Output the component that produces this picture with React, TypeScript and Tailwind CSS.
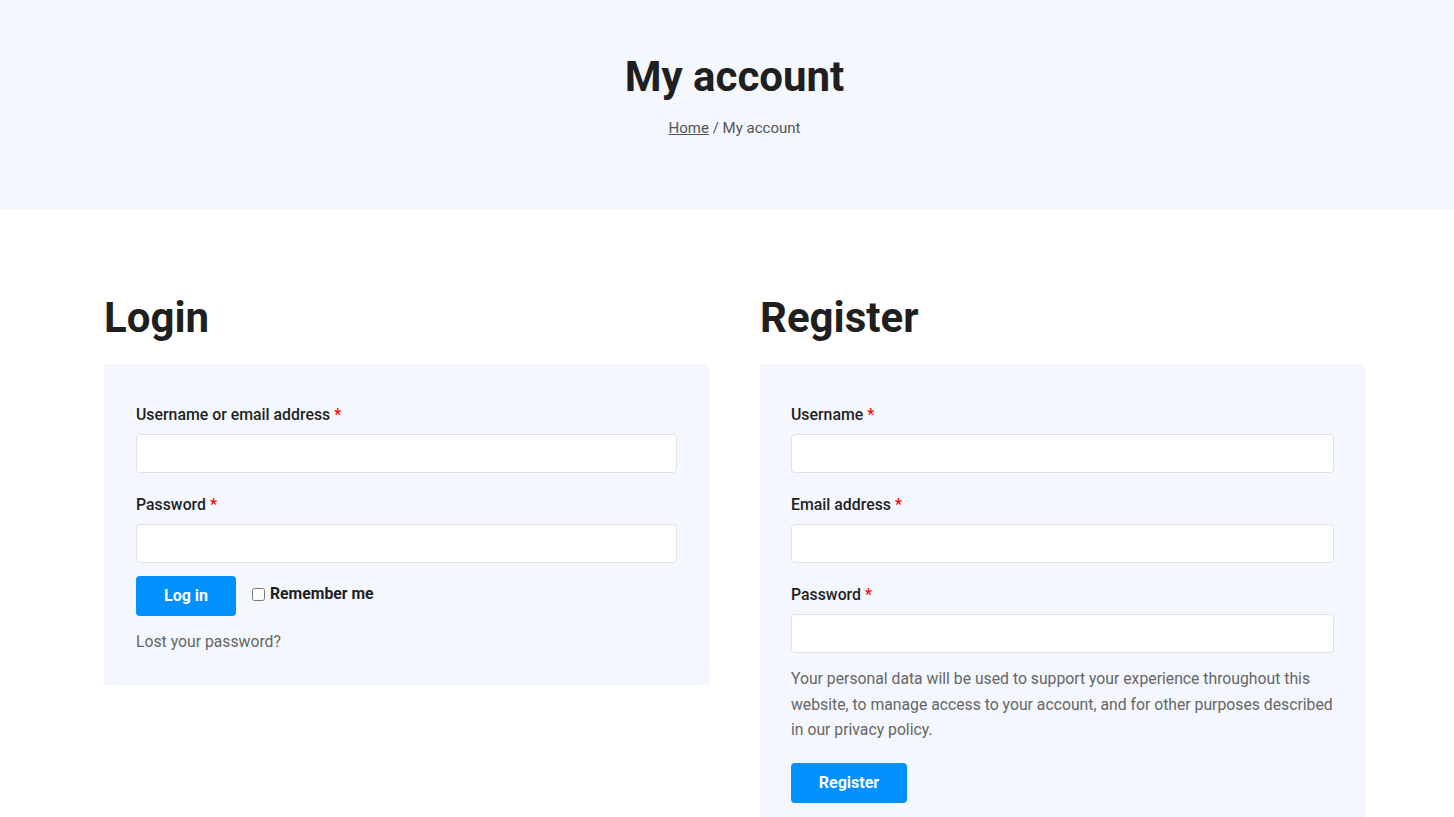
import React from 'react';

const font = { fontFamily: 'Roboto, "Liberation Sans", sans-serif' };

const inputCls =
  'block w-full h-[39px] bg-white border border-[#dfe1e5] rounded-[4px] px-3 outline-none';

function Field({ label, type = 'text', mb = 'mb-[21px]' }: { label: string; type?: string; mb?: string }) {
  return (
    <div className={mb}>
      <label className="block h-[22px] text-[15.85px] leading-[22px] font-medium text-[#1f1f1f] mb-[8px]">
        {label} <span className="text-[#ff0000]">*</span>
      </label>
      <input type={type} className={inputCls} />
    </div>
  );
}

export default function App() {
  return (
    <div className="min-h-screen bg-white text-[#1f1f1f]" style={font}>
      <header className="h-[209px] bg-[#f4f7fd] flex flex-col items-center pt-[50px] pl-[15px]">
        <h1 className="text-[42px] leading-[54px] font-bold text-[#1f1f1f]">My account</h1>
        <div className="mt-[14px] text-[15px] leading-5 text-[#555]">
          <a href="#" className="underline">Home</a> / My account
        </div>
      </header>

      <main className="ml-[104px] w-[1261px] pt-[84px] grid grid-cols-2 gap-[51px] items-start">
        <section>
          <h2 className="text-[42px] leading-[50px] font-bold mb-[21px]">Login</h2>
          <div className="bg-[#f4f7fd] px-[32px] pt-[40px] pb-[31px]">
            <Field label="Username or email address" />
            <Field label="Password" type="password" mb="mb-[13px]" />
            <div className="flex items-center">
              <button className="w-[100px] h-[40px] rounded-[4px] bg-[#0091ff] text-white text-[16px] font-bold">
                Log in
              </button>
              <label className="ml-[16px] flex items-center text-[15.75px] font-bold -mt-[4px]">
                <input type="checkbox" className="w-[13px] h-[13px] mr-[5px]" />
                Remember me
              </label>
            </div>
            <a href="#" className="block mt-[13px] text-[15.75px] leading-[25px] text-[#666]">
              Lost your password?
            </a>
          </div>
        </section>

        <section>
          <h2 className="text-[42px] leading-[50px] font-bold mb-[21px]">Register</h2>
          <div className="bg-[#f4f7fd] px-[31px] pt-[40px] pb-[20px]">
            <Field label="Username" />
            <Field label="Email address" />
            <Field label="Password" type="password" mb="mb-[13px]" />
            <p className="text-[15.75px] leading-[25.5px] text-[#666] mb-[20px]">
              Your personal data will be used to support your experience throughout this website, to manage access to your account, and for other purposes described in our privacy policy.
            </p>
            <button className="w-[116px] h-[40px] rounded-[4px] bg-[#0091ff] text-white text-[16px] font-bold">
              Register
            </button>
          </div>
        </section>
      </main>
    </div>
  );
}
